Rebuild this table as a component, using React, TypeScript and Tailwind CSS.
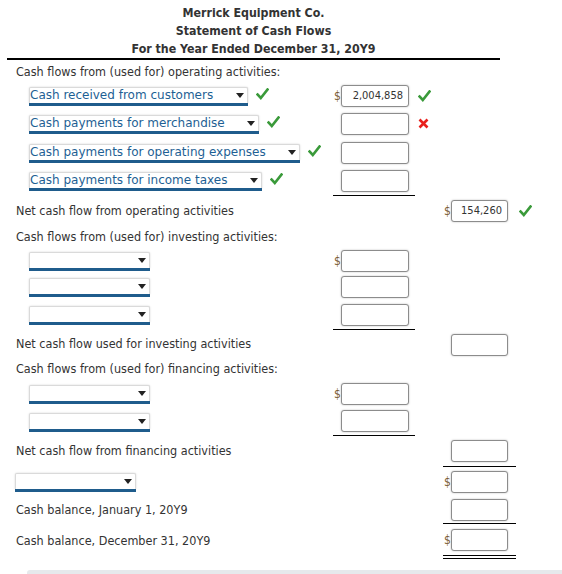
import React from "react";

const font = { fontFamily: '"DejaVu Sans Condensed", "DejaVu Sans", Tahoma, sans-serif' };
const ddFont = { fontFamily: '"DejaVu Sans", Verdana, sans-serif' };

function Check() {
  return (
    <svg width="13" height="12" viewBox="0 0 13 12" className="shrink-0">
      <path d="M1.5 6.5 L4.8 10 L11.5 1.5" fill="none" stroke="#3a9a3a" strokeWidth="2.6" strokeLinecap="square" />
    </svg>
  );
}

function Cross() {
  return (
    <svg width="11" height="11" viewBox="0 0 11 11" className="shrink-0">
      <path d="M1.5 1.5 L9.5 9.5 M9.5 1.5 L1.5 9.5" fill="none" stroke="#e8201c" strokeWidth="2.6" />
    </svg>
  );
}

function Dropdown({ text, width }: { text?: string; width: number }) {
  return (
    <div
      className="relative flex h-[16px] items-center bg-white border border-b-0 border-[#dadada] rounded-t-[2px] shadow-[0_0_2px_#d0d0d0]"
      style={{ width, ...ddFont }}
    >
      <span className="pr-[20px] text-[12px] leading-[13px] text-[#1e5f94] whitespace-nowrap">{text ?? ""}</span>
      <svg width="8" height="5" viewBox="0 0 8 5" className="absolute right-[3px] top-[5px]">
        <path d="M0 0 H8 L4 5 Z" fill="#222" />
      </svg>
      <div className="absolute left-[-1px] right-[-1px] bottom-[-3px] h-[3px] bg-[#1f5c8c]" />
    </div>
  );
}

function Input({ value, w = 68 }: { value?: string; w?: number }) {
  return (
    <div
      className="h-[22px] bg-white border border-[#8c8c8c] rounded-[3px] shadow-[0_0_2px_#bbb] flex items-center justify-end pr-[5px] text-[11px] text-[#333]"
      style={{ width: w }}
    >
      {value}
    </div>
  );
}

function Dollar({ show }: { show?: boolean }) {
  return (
    <span className="w-[8px] text-[12px] text-[#7a5a35] leading-none mr-[-1px]" style={{ visibility: show ? "visible" : "hidden" }}>
      $
    </span>
  );
}

type Cell = { input?: boolean; dollar?: boolean; value?: string; line?: "single" | "double" };

function Row({
  h,
  left,
  c1,
  mark1,
  c2,
  mark2,
}: {
  h: number;
  left?: React.ReactNode;
  c1?: Cell;
  mark1?: React.ReactNode;
  c2?: Cell;
  mark2?: React.ReactNode;
}) {
  return (
    <div className="flex" style={{ height: h }}>
      <div className="w-[333px] shrink-0 flex items-center">{left}</div>
      <div className={`w-[82px] shrink-0 flex items-center pl-[1px] ${c1?.line === "single" ? "border-b border-black" : ""}`}>
        {c1?.input && (
          <>
            <Dollar show={c1.dollar} />
            <Input value={c1.value} />
          </>
        )}
      </div>
      <div className="w-[28px] shrink-0 flex items-center pl-[3px]">{mark1}</div>
      <div
        className={`w-[73px] shrink-0 flex flex-col ${
          c2?.line === "single" ? "border-b border-black" : c2?.line === "double" ? "border-b border-black pb-[2px]" : ""
        }`}
      >
        <div className={`flex-1 flex items-center pl-[1px] ${c2?.line === "double" ? "border-b border-black" : ""}`}>
          {c2?.input && (
            <>
              <Dollar show={c2.dollar} />
              <Input value={c2.value} w={57} />
            </>
          )}
        </div>
      </div>
      <div className="flex items-center pl-[3px]">{mark2}</div>
    </div>
  );
}

function Label({ children }: { children: React.ReactNode }) {
  return <span className="pl-[16px] text-[12.5px] text-[#333] whitespace-nowrap">{children}</span>;
}

function Dd({ text, width, indent = 29, mark }: { text?: string; width: number; indent?: number; mark?: boolean }) {
  return (
    <div className="flex items-center pb-[2px]" style={{ paddingLeft: indent }}>
      <Dropdown text={text} width={width} />
      {mark && (
        <span className="ml-[8px] mt-[-2px]">
          <Check />
        </span>
      )}
    </div>
  );
}

export default function App() {
  return (
    <div className="w-[562px] h-[574px] overflow-hidden bg-white relative" style={font}>
      <div className="pt-[4px] pl-[7px]">
        <div className="w-[493px] border-b-2 border-black text-center font-bold text-[12.3px] leading-[18px] text-[#333]">
          <div>Merrick Equipment Co.</div>
          <div>Statement of Cash Flows</div>
          <div>For the Year Ended December 31, 20Y9</div>
        </div>
      </div>
      <Row h={24} left={<Label>Cash flows from (used for) operating activities:</Label>} />
      <Row
        h={24}
        left={<Dd text="Cash received from customers" width={219} mark />}
        c1={{ input: true, dollar: true, value: "2,004,858" }}
        mark1={<Check />}
      />
      <Row
        h={31}
        left={<Dd text="Cash payments for merchandise" width={230} mark />}
        c1={{ input: true }}
        mark1={<Cross />}
      />
      <Row h={27} left={<Dd text="Cash payments for operating expenses" width={271} mark />} c1={{ input: true }} />
      <Row h={30} left={<Dd text="Cash payments for income taxes" width={233} mark />} c1={{ input: true, line: "single" }} />
      <Row
        h={30}
        left={<Label>Net cash flow from operating activities</Label>}
        c2={{ input: true, dollar: true, value: "154,260" }}
        mark2={<Check />}
      />
      <Row h={22} left={<Label>Cash flows from (used for) investing activities:</Label>} />
      <Row h={26} left={<Dd width={121} />} c1={{ input: true, dollar: true }} />
      <Row h={26} left={<Dd width={121} />} c1={{ input: true }} />
      <Row h={30} left={<Dd width={121} />} c1={{ input: true, line: "single" }} />
      <Row h={29} left={<Label>Net cash flow used for investing activities</Label>} c2={{ input: true }} />
      <Row h={21} left={<Label>Cash flows from (used for) financing activities:</Label>} />
      <Row h={27} left={<Dd width={121} />} c1={{ input: true, dollar: true }} />
      <Row h={29} left={<Dd width={121} />} c1={{ input: true, line: "single" }} />
      <Row h={31} left={<Label>Net cash flow from financing activities</Label>} c2={{ input: true, line: "single" }} />
      <Row h={29} left={<Dd width={121} indent={15} />} c2={{ input: true, dollar: true }} />
      <Row h={28} left={<Label>Cash balance, January 1, 20Y9</Label>} c2={{ input: true, line: "single" }} />
      <Row h={35} left={<Label>Cash balance, December 31, 20Y9</Label>} c2={{ input: true, dollar: true, line: "double" }} />
      <div className="mt-[11px] ml-[27px] h-[20px] bg-[#e6e9ec] rounded-tl-[3px]" />
    </div>
  );
}
